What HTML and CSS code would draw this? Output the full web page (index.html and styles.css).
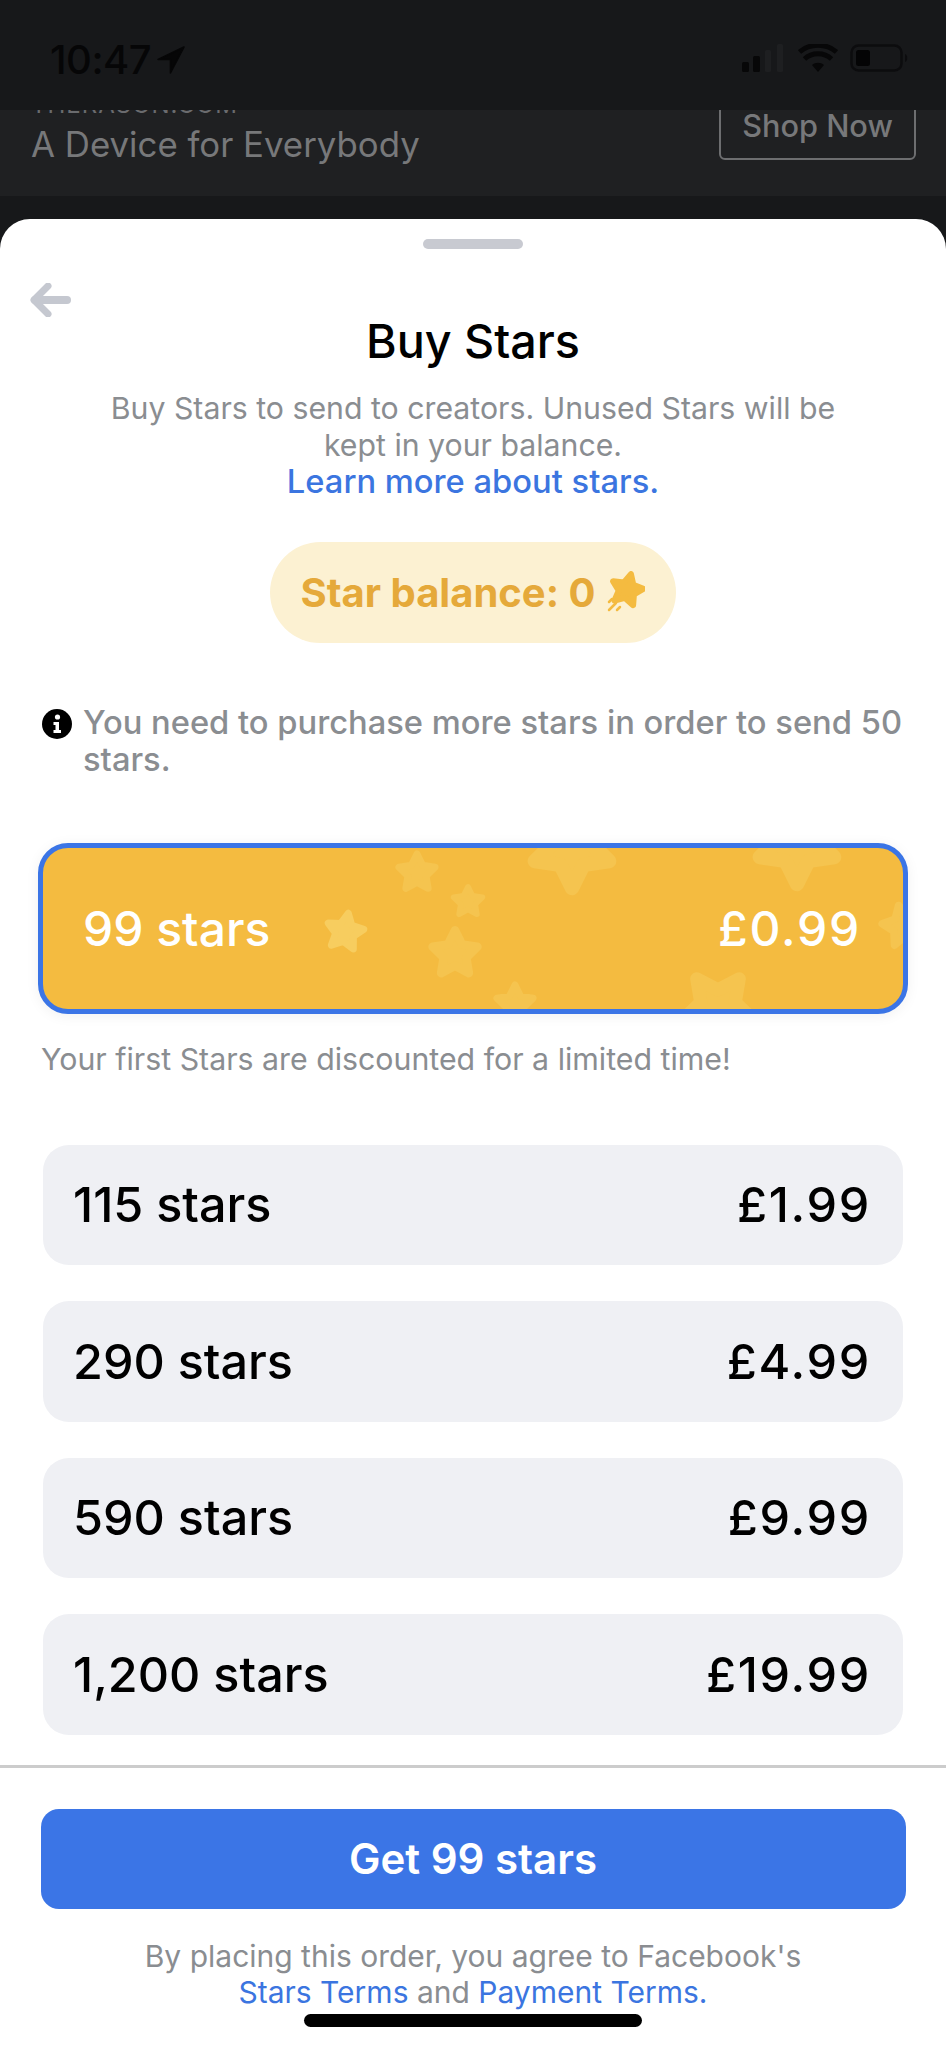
FILE: index.html
```html
<!DOCTYPE html>
<html lang="en">
<head>
<meta charset="utf-8">
<title>Buy Stars</title>
<link rel="stylesheet" href="styles.css">
</head>
<body>
<div class="screen">
  <header class="status">
    <div class="status-left">
      <span class="time">10:47</span>
      <svg class="loc" viewBox="0 0 26 26"><path d="M25 1 1 12.500h11.500V25z" fill="#060607" stroke="#060607" stroke-width="1.500" stroke-linejoin="round"/></svg>
    </div>
    <div class="status-right">
      <svg class="signal" viewBox="0 0 44 28"><rect x="0" y="18" width="7" height="10" rx="1.500" fill="#070708"/><rect x="11" y="12" width="7" height="16" rx="1.500" fill="#070708"/><rect x="23" y="6" width="6" height="22" rx="1.500" fill="#1e1f21"/><rect x="35" y="0" width="6" height="28" rx="1.500" fill="#1e1f21"/></svg>
      <svg class="wifi" viewBox="0 0 40 28"><path d="M20 28 14 21c3.500-3 8.500-3 12 0z" fill="#070708"/><path d="M6.500 13.500C14 6.500 26 6.500 33.500 13.500" transform="translate(0 1.500)" fill="none" stroke="#070708" stroke-width="5"/><path d="M1.500 7C11.500-2 28.500-2 38.500 7" transform="translate(0 1)" fill="none" stroke="#070708" stroke-width="5"/></svg>
      <svg class="battery" viewBox="0 0 60 28"><rect x="1.500" y="1.500" width="50" height="25" rx="7" fill="none" stroke="#0c0c0e" stroke-width="2.500"/><rect x="6" y="6" width="14" height="16" rx="2.500" fill="#040405"/><path d="M55 10c3 1 3 7 0 8z" fill="#0c0c0e"/></svg>
    </div>
  </header>

  <section class="ad">
    <div class="ad-copy">
      <div class="ad-domain">THERASON.COM</div>
      <div class="ad-title">A Device for Everybody</div>
    </div>
    <div class="ad-button">Shop Now</div>
  </section>

  <main class="sheet">
    <div class="handle"></div>
    <svg class="back" viewBox="0 0 42 34"><path d="M19 3 5 17l14 14" fill="none" stroke="#c5c8d0" stroke-width="7" stroke-linecap="round" stroke-linejoin="round"/><path d="M6 17h32" fill="none" stroke="#c5c8d0" stroke-width="8" stroke-linecap="round"/></svg>
    <h1 class="title">Buy Stars</h1>
    <p class="intro">Buy Stars to send to creators. Unused Stars will be<br>kept in your balance.<br><a class="link link-strong">Learn more about stars.</a></p>

    <div class="balance">
      <span>Star balance: 0</span>
      <svg class="balance-star" viewBox="0 0 42 42"><g class="star-gold"><use href="#star" transform="translate(24 19) rotate(14) scale(.43)"/></g><path d="M9 28l-3 3M13 32l-7 7M17 36l-3 3" stroke="#f4bb40" stroke-width="2.500" stroke-linecap="round"/></svg>
    </div>

    <div class="notice">
      <svg class="info" viewBox="0 0 30 30"><circle cx="15" cy="15" r="15" fill="#000"/><circle cx="15.500" cy="8" r="2.600" fill="#fff"/><path d="M11.500 13h5.500v8h2v3h-7.500v-3h2v-5h-2z" fill="#fff"/></svg>
      <p class="notice-text">You need to purchase more stars in order to send 50 stars.</p>
    </div>

    <div class="featured">
      <svg class="featured-stars" viewBox="0 0 860 161" preserveAspectRatio="none">
        <defs>
          <path id="star" d="M0-38 11.200-15.400 36.100-11.700 18.100 5.900 22.300 30.700 0 19-22.300 30.700-18.100 5.900-36.100-11.700-11.200-15.400z" stroke-width="14" stroke-linejoin="round"/>
        </defs>
        <g class="star-light">
          <use href="#star" transform="translate(302 84) rotate(10) scale(.5)"/>
        </g>
        <g class="star-soft">
          <use href="#star" transform="translate(374 25) scale(.5)"/>
          <use href="#star" transform="translate(425 54) scale(.4)"/>
          <use href="#star" transform="translate(412 106) scale(.62)"/>
          <use href="#star" transform="translate(472 156) scale(.5)"/>
          <use href="#star" transform="translate(529 1) rotate(180) scale(1.030)"/>
          <use href="#star" transform="translate(754 -3) rotate(180) scale(1.030)"/>
          <use href="#star" transform="translate(675 160) rotate(180) scale(.95)"/>
          <use href="#star" transform="translate(860 78) rotate(-12) scale(.55)"/>
        </g>
      </svg>
      <span class="featured-label">99 stars</span>
      <span class="featured-label featured-price">£0.99</span>
    </div>
    <p class="discount">Your first Stars are discounted for a limited time!</p>

    <ul class="packs">
      <li class="pack"><span>115 stars</span><span class="pack-price">£1.99</span></li>
      <li class="pack"><span>290 stars</span><span class="pack-price">£4.99</span></li>
      <li class="pack"><span>590 stars</span><span class="pack-price">£9.99</span></li>
      <li class="pack"><span>1,200 stars</span><span class="pack-price">£19.99</span></li>
    </ul>

    <div class="divider"></div>
    <div class="cta">Get 99 stars</div>
    <p class="terms">By placing this order, you agree to Facebook's<br><a class="link">Stars Terms</a> and <a class="link">Payment Terms</a><a class="link">.</a></p>
    <div class="home-bar"></div>
  </main>
</div>
</body>
</html>
```
FILE: styles.css
```css
* { box-sizing: border-box; }
html, body { margin: 0; padding: 0; background: #17181a; }
body { font-family: Inter, "Liberation Sans", sans-serif; }
p, h1, ul { margin: 0; padding: 0; }

.screen { width: 946px; height: 2048px; overflow: hidden; display: flex; flex-direction: column; }

.status { height: 110px; flex: none; background: #17181a; display: flex; justify-content: space-between; align-items: flex-start; padding: 38px 36px 0 50px; }
.status-left { display: flex; align-items: center; gap: 6px; }
.time { font-size: 40px; line-height: 44px; font-weight: 500; color: #060607; letter-spacing: -.5px; }
.loc { width: 28px; height: 28px; }
.status-right { display: flex; align-items: center; gap: 12px; padding-top: 6px; }
.signal { width: 44px; height: 28px; }
.wifi { width: 40px; height: 28px; }
.battery { width: 60px; height: 28px; }

.ad { height: 86px; flex: none; background: #1f2022; overflow: hidden; display: flex; justify-content: space-between; align-items: flex-start; padding: 0 30px 0 31px; }
.ad-copy { margin-top: -19px; }
.ad-domain { font-size: 24px; line-height: 28px; color: #6a6b6e; letter-spacing: 1px; }
.ad-title { font-size: 34.800px; line-height: 44px; color: #77787a; margin-top: 3px; }
.ad-button { width: 197px; height: 70px; margin-top: -20px; border: 2px solid #6d6e70; border-radius: 6px; color: #77787a; font-size: 30.700px; line-height: 1; font-weight: 500; display: flex; align-items: center; justify-content: center; padding-top: 2px; }

.sheet { flex: none; height: 1829px; margin-top: 23px; background: #fff; border-radius: 30px 30px 0 0; display: flex; flex-direction: column; align-items: center; position: relative; padding-top: 20px; }
.handle { width: 100px; height: 10px; border-radius: 5px; background: #c8cad1; }
.back { position: absolute; left: 29px; top: 64px; width: 42px; height: 34px; }
.title { font-size: 46.700px; line-height: 56px; font-weight: 500; color: #000; margin-top: 64px; }
.intro { font-size: 30.250px; line-height: 36.500px; color: #8a8d91; text-align: center; margin-top: 21px; }
.link { color: #3b75e0; }
.link-strong { font-size: 32.700px; font-weight: 500; }

.balance { width: 406px; height: 101px; margin-top: 41px; border-radius: 51px; background: #fcf1d2; color: #e5a93a; font-size: 40px; font-weight: 700; display: flex; align-items: center; justify-content: center; gap: 8px; }
.balance-star { width: 42px; height: 42px; }
.star-gold { fill: #f4bb40; stroke: #f4bb40; }

.notice { align-self: stretch; display: flex; align-items: flex-start; gap: 11px; padding: 0 36px 0 42px; margin-top: 61px; }
.info { width: 30px; height: 30px; flex: none; margin-top: 5px; }
.notice-text { font-size: 32.700px; line-height: 37px; color: #8a8d91; font-weight: 500; }

.featured { width: 870px; height: 171px; margin-top: 65px; border: 5px solid #3b75e6; border-radius: 30px; background: #f4bb40; box-shadow: 0 2px 14px rgba(0,0,0,.06); display: flex; align-items: center; justify-content: space-between; padding: 0 42px 0 40px; position: relative; overflow: hidden; }
.featured-stars { position: absolute; left: 0; top: 0; width: 860px; height: 161px; }
.star-light { fill: #f7cd5f; stroke: #f7cd5f; }
.star-soft { fill: #f5c44f; stroke: #f5c44f; }
.featured-label { position: relative; font-size: 48px; font-weight: 500; color: #fff; }
.featured-price { letter-spacing: 1.800px; }

.discount { align-self: flex-start; margin: 26px 0 0 41px; font-size: 30.300px; line-height: 38px; color: #8a8d91; }

.packs { list-style: none; margin-top: 67px; display: flex; flex-direction: column; gap: 36px; }
.pack { width: 860px; height: 120.500px; border-radius: 26px; background: #eff0f4; display: flex; align-items: center; justify-content: space-between; padding: 0 32px 0 30px; font-size: 48.500px; font-weight: 500; color: #000; }
.pack-price { letter-spacing: 1.700px; }

.divider { align-self: stretch; height: 3px; background: #ccc; margin-top: 30px; }
.cta { width: 865px; height: 100px; margin-top: 41px; background: #3b75e6; border-radius: 18px; color: #fff; font-size: 42px; font-weight: 600; display: flex; align-items: center; justify-content: center; }
.terms { font-size: 30px; line-height: 36px; color: #8a8d91; text-align: center; margin-top: 29px; }
.home-bar { width: 338px; height: 13px; border-radius: 7px; background: #000; margin-top: 4px; }
```
